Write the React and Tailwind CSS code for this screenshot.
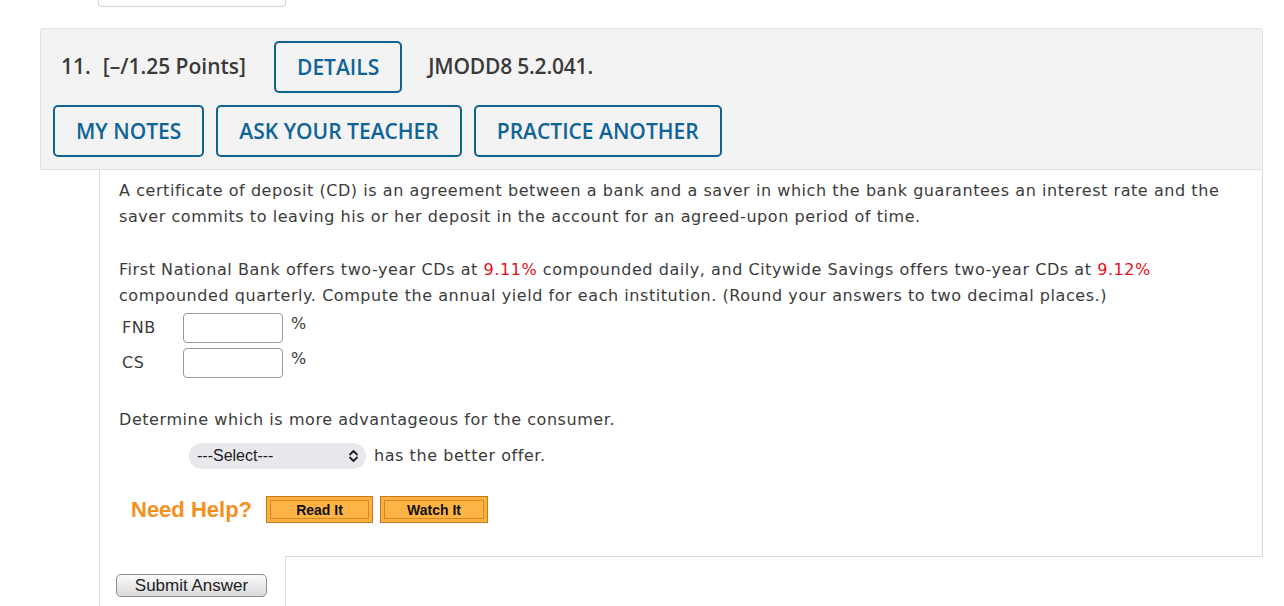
import React from 'react';

// ===================== 상수 =====================
const BODY_FONT = { fontFamily: '"DejaVu Sans", Verdana, sans-serif' };
const HEAD_FONT = { fontFamily: '"Open Sans", "Noto Sans", sans-serif' };
const ARIAL = { fontFamily: '"Liberation Sans", Arial, sans-serif' };

const ACTIONS = ['MY NOTES', 'ASK YOUR TEACHER', 'PRACTICE ANOTHER'];
const ANSWERS = [
  { id: 'fnb', label: 'FNB' },
  { id: 'cs', label: 'CS' },
];

function OutlineButton({ children }) {
  return (
    <button
      className="h-[52px] px-[21px] rounded-[5px] border-2 border-[#0e6394] bg-transparent text-[21px] font-semibold text-[#0f6497] leading-none"
      style={HEAD_FONT}
    >
      {children}
    </button>
  );
}

function HelpButton({ children, width }) {
  return (
    <button
      className="h-[27px] p-[3px] border border-[#c7781f] bg-[#fbb040]"
      style={{ width }}
    >
      <span
        className="flex h-full w-full items-center justify-center border border-[#d48828] bg-[#fdb445] text-[14px] font-bold text-[#111] leading-none"
        style={ARIAL}
      >
        {children}
      </span>
    </button>
  );
}

// ===================== 메인 컴포넌트 =====================
export default function App() {
  return (
    <div className="min-h-[606px] bg-white overflow-hidden">
      {/* 이전 문제 박스 끝부분 */}
      <div className="ml-[98px] w-[188px] h-[7px] border border-t-0 border-[#d4d4d4] rounded-b-[4px] bg-white" />

      {/* 문제 헤더 */}
      <div className="mt-[21px] ml-[40px] w-[1223px] bg-[#f3f3f3] border border-[#e2e2e2] rounded-t-[3px] px-[12px] pt-[12px] pb-[12px]">
        <div className="flex items-center">
          <span className="ml-[8px] text-[21px] font-semibold text-[#3a3a3a]" style={HEAD_FONT}>
            11.
          </span>
          <span className="ml-[12px] text-[21px] font-semibold text-[#3a3a3a]" style={HEAD_FONT}>
            [–/1.25 Points]
          </span>
          <div className="ml-[28px]">
            <OutlineButton>DETAILS</OutlineButton>
          </div>
          <span className="ml-[26px] text-[21px] font-semibold text-[#3a3a3a] tracking-[-0.2px]" style={HEAD_FONT}>
            JMODD8 5.2.041.
          </span>
        </div>
        <div className="mt-[12px] flex gap-[12px]">
          {ACTIONS.map(a => (
            <OutlineButton key={a}>{a}</OutlineButton>
          ))}
        </div>
      </div>

      {/* 문제 본문 */}
      <div className="ml-[99px] w-[1164px] border-l border-[#dcdcdc]">
        <div
          className="border-r border-[#d8d8d8] pl-[19px] pr-[30px] pt-[8px] pb-[33px] text-[16px] leading-[26px] tracking-[0.56px] text-[#3b3b3b]"
          style={BODY_FONT}
        >
          <p>
            A certificate of deposit (CD) is an agreement between a bank and a saver in which the bank guarantees an
            interest rate and the saver commits to leaving his or her deposit in the account for an agreed-upon period of
            time.
          </p>
          <p className="mt-[27px]">
            First National Bank offers two-year CDs at <span className="text-[#e3101a]">9.11%</span> compounded daily,
            and Citywide Savings offers two-year CDs at <span className="text-[#e3101a]">9.12%</span> compounded
            quarterly. Compute the annual yield for each institution. (Round your answers to two decimal places.)
          </p>

          <div className="mt-[4px] flex flex-col gap-[5px]">
            {ANSWERS.map(r => (
              <div key={r.id} className="flex items-center h-[30px]">
                <span className="w-[64px] pl-[3px]">{r.label}</span>
                <input
                  type="text"
                  className="w-[100px] h-[30px] rounded-[4px] border border-[#9a9a9a] bg-white outline-none"
                />
                <span className="ml-[8px] -mt-[8px]">%</span>
              </div>
            ))}
          </div>

          <p className="mt-[29px]">Determine which is more advantageous for the consumer.</p>

          <div className="mt-[10px] flex items-center">
            <div
              className="ml-[70px] w-[177px] h-[26px] rounded-full bg-[#e8e8ec] flex items-center justify-between pl-[8px] pr-[7px] text-[16px] tracking-normal text-[#1e1e1e]"
              style={ARIAL}
            >
              <span>---Select---</span>
              <svg width="11" height="14" viewBox="0 0 11 14" fill="none" stroke="#222" strokeWidth="1.8" strokeLinecap="round" strokeLinejoin="round">
                <path d="M2 5.5 L5.5 2 L9 5.5" />
                <path d="M2 8.5 L5.5 12 L9 8.5" />
              </svg>
            </div>
            <span className="ml-[8px]">has the better offer.</span>
          </div>

          <div className="mt-[27px] flex items-center tracking-normal">
            <span className="ml-[12px] text-[22px] font-bold text-[#f4901e]" style={ARIAL}>
              Need Help?
            </span>
            <div className="ml-[14px] flex gap-[7px]">
              <HelpButton width={107}>Read It</HelpButton>
              <HelpButton width={108}>Watch It</HelpButton>
            </div>
          </div>
        </div>

        {/* 제출 영역 */}
        <div className="flex h-[50px]">
          <div className="w-[186px] border-r border-[#dcdcdc] pl-[16px] pt-[17px]">
            <button
              className="w-[151px] h-[23px] rounded-[5px] border border-[#8c8c8c] bg-gradient-to-b from-[#fbfbfb] to-[#dadada] text-[17px] text-[#222] leading-none"
              style={ARIAL}
            >
              Submit Answer
            </button>
          </div>
          <div className="flex-1 border-t border-[#d8d8d8]" />
        </div>
      </div>
    </div>
  );
}
